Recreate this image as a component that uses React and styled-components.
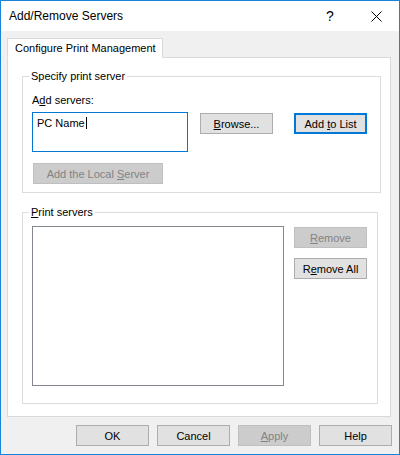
import styled, { createGlobalStyle } from 'styled-components';

const GlobalStyle = createGlobalStyle`
  html, body {
    margin: 0;
    padding: 0;
    background: #ffffff;
  }
  * {
    box-sizing: border-box;
  }
`

const Window = styled.div`
  width: 400px;
  height: 455px;
  display: flex;
  flex-direction: column;
  border: 1px solid #1883d7;
  background: #f0f0f0;
  font-family: "Liberation Sans", Arial, sans-serif;
  font-size: 11px;
  color: #000000;
`

const TitleBar = styled.div`
  height: 30px;
  display: flex;
  align-items: center;
  background: #ffffff;
  padding-left: 8px;
`

const Title = styled.div`
  flex: 1;
  font-size: 12px;
`

const TitleButton = styled.div`
  width: 46px;
  height: 30px;
  display: flex;
  align-items: center;
  justify-content: center;
  font-size: 14px;
`

const Body = styled.div`
  flex: 1;
  display: flex;
  flex-direction: column;
  padding: 7px 8px 0 6px;
`

const TabStrip = styled.div`
  display: flex;
  position: relative;
  z-index: 1;
  margin-bottom: -1px;
`

const Tab = styled.div`
  height: 20px;
  display: flex;
  align-items: center;
  padding: 0 6px 0 7px;
  background: #ffffff;
  border: 1px solid #d9d9d9;
  border-bottom-color: #ffffff;
`

const Panel = styled.div`
  height: 360px;
  background: #ffffff;
  border: 1px solid #d9d9d9;
  padding: 0 0 0 14px;
  display: flex;
  flex-direction: column;
`

const GroupBox = styled.div`
  width: ${p => p.$width}px;
  margin-top: ${p => p.$top}px;
  border: 1px solid #dcdcdc;
  display: flex;
  flex-direction: column;
  padding: 0 0 ${p => p.$bottom}px 9px;
`

const Legend = styled.div`
  align-self: flex-start;
  margin: -9px 0 0 -3px;
  padding: 0 2px;
  height: 16px;
  line-height: 16px;
  background: #ffffff;
`

const Label = styled.div`
  margin-top: 8px;
  height: 16px;
  line-height: 16px;
`

const Row = styled.div`
  display: flex;
  align-items: flex-start;
  margin-top: ${p => p.$top || 0}px;
`

const TextBox = styled.div`
  width: 156px;
  height: 40px;
  border: 1px solid #0078d7;
  padding: 2px 4px;
  line-height: 16px;
`

const Caret = styled.span`
  display: inline-block;
  width: 1px;
  height: 12px;
  background: #000000;
  margin-left: 1px;
  vertical-align: -2px;
`

const Button = styled.div`
  width: ${p => p.$width || 73}px;
  height: 21px;
  margin: ${p => p.$margin || '0'};
  display: flex;
  align-items: center;
  justify-content: center;
  background: ${p => (p.$disabled ? '#cccccc' : '#e1e1e1')};
  border: 1px solid ${p => (p.$disabled ? '#bfbfbf' : '#adadad')};
  color: ${p => (p.$disabled ? '#838383' : '#000000')};
  ${p => p.$default && `
    border: 1px solid #0078d7;
    box-shadow: inset 0 0 0 1px #0078d7;
  `}
  white-space: nowrap;
`

const ListBox = styled.div`
  width: 252px;
  height: 160px;
  border: 1px solid #828790;
  background: #ffffff;
`

const SideButtons = styled.div`
  display: flex;
  flex-direction: column;
  gap: 10px;
  margin: 1px 0 0 10px;
`

const Footer = styled.div`
  display: flex;
  justify-content: flex-end;
  gap: 8px;
  margin-top: 8px;
`

function CloseIcon() {
  return (
    <svg width="11" height="11" viewBox="0 0 11 11">
      <path d="M0.5 0.5 L10.5 10.5 M10.5 0.5 L0.5 10.5" stroke="#000" strokeWidth="1" fill="none" />
    </svg>
  )
}

function App() {
  return (
    <>
      <GlobalStyle />
      <Window>
        <TitleBar>
          <Title>Add/Remove Servers</Title>
          <TitleButton>?</TitleButton>
          <TitleButton><CloseIcon /></TitleButton>
        </TitleBar>
        <Body>
          <TabStrip>
            <Tab>Configure Print Management</Tab>
          </TabStrip>
          <Panel>
            <GroupBox $width={359} $top={18} $bottom={8}>
              <Legend>Specify print server</Legend>
              <Label>A<u>d</u>d servers:</Label>
              <Row $top={4}>
                <TextBox>PC Name<Caret /></TextBox>
                <Button $margin="1px 0 0 12px"><span><u>B</u>rowse...</span></Button>
                <Button $margin="1px 0 0 21px" $default><span>Add <u>t</u>o List</span></Button>
              </Row>
              <Button $width={130} $margin="11px 0 0 1px" $disabled>
                <span>Add the Local <u>S</u>erver</span>
              </Button>
            </GroupBox>
            <GroupBox $width={356} $top={19} $bottom={17}>
              <Legend><u>P</u>rint servers</Legend>
              <Row $top={6}>
                <ListBox />
                <SideButtons>
                  <Button $disabled><span><u>R</u>emove</span></Button>
                  <Button><span>R<u>e</u>move All</span></Button>
                </SideButtons>
              </Row>
            </GroupBox>
          </Panel>
          <Footer>
            <Button>OK</Button>
            <Button>Cancel</Button>
            <Button $disabled><span><u>A</u>pply</span></Button>
            <Button $margin="0 -1px 0 0">Help</Button>
          </Footer>
        </Body>
      </Window>
    </>
  )
}

export default App;
